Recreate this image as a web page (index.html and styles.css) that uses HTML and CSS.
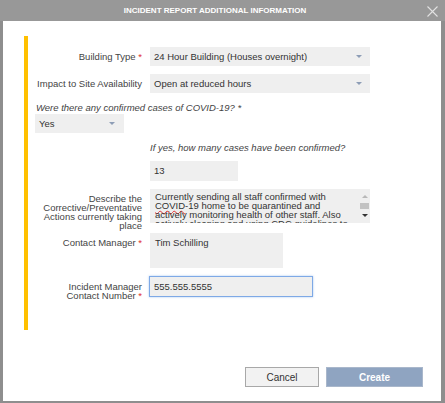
FILE: index.html
```html
<!DOCTYPE html>
<html>
<head>
<meta charset="utf-8">
<link rel="stylesheet" href="styles.css">
</head>
<body>
<div class="dialog">
  <div class="titlebar">
    <span class="title">INCIDENT REPORT ADDITIONAL INFORMATION</span>
    <svg class="close" width="11" height="11" viewBox="0 0 11 11"><path d="M0.5 0.5L10.5 10.5M10.5 0.5L0.5 10.5" stroke="#e2e2e2" stroke-width="1.1" fill="none"/></svg>
  </div>
  <div class="content">
    <div class="section">
      <div class="row row-select">
        <div class="label">Building Type <span class="req">*</span></div>
        <div class="select wide"><span>24 Hour Building (Houses overnight)</span><span class="caret"></span></div>
      </div>
      <div class="row row-select gap8">
        <div class="label">Impact to Site Availability</div>
        <div class="select wide"><span>Open at reduced hours</span><span class="caret"></span></div>
      </div>
      <div class="question">Were there any confirmed cases of COVID-19? *</div>
      <div class="select small"><span>Yes</span><span class="caret"></span></div>
      <div class="question sub">If yes, how many cases have been confirmed?</div>
      <div class="input count">13</div>
      <div class="row gap8">
        <div class="label multi">Describe the<br>Corrective/Preventative<br>Actions currently taking<br>place</div>
        <div class="textarea">
          <div class="ta-text">Currently sending all staff confirmed with<br><span class="spell">COVID</span>-19 home to be quarantined and<br>actively monitoring health of other staff. Also<br>actively cleaning and using CDC guidelines to</div>
          <div class="scrollbar">
            <span class="sb-up"></span>
            <span class="sb-thumb"></span>
            <span class="sb-down"></span>
          </div>
        </div>
      </div>
      <div class="row gap3">
        <div class="label single">Contact Manager <span class="req">*</span></div>
        <div class="input manager">Tim Schilling</div>
      </div>
      <div class="row gap8">
        <div class="label multi phone-label">Incident Manager<br>Contact Number <span class="req">*</span></div>
        <div class="input phone">555.555.5555</div>
      </div>
    </div>
    <div class="actions">
      <button class="btn cancel">Cancel</button>
      <button class="btn create">Create</button>
    </div>
  </div>
</div>
</body>
</html>
```
FILE: styles.css
```css
html, body {
  margin: 0;
  padding: 0;
}
body {
  background: #8e8e8e;
  font-family: "Liberation Sans", Arial, sans-serif;
  font-size: 9.5px;
  color: #444;
}
.dialog {
  width: 445px;
  height: 403px;
  display: flex;
  flex-direction: column;
}
.titlebar {
  height: 21px;
  flex-shrink: 0;
  background: #989898;
  display: flex;
  align-items: center;
}
.title {
  flex: 1;
  text-align: center;
  color: #fff;
  font-weight: bold;
  font-size: 8px;
  padding-left: 3px;
}
.close {
  display: block;
  margin-right: 7px;
  margin-top: 1px;
}
.content {
  flex: 1;
  background: #fff;
  margin: 0 4px 2px 3px;
  display: flex;
  flex-direction: column;
}
.section {
  margin: 15px 0 0 21px;
  height: 294px;
  box-sizing: border-box;
  border-left: 4px solid #ffc000;
  padding: 11px 0 0 7px;
}
.row {
  display: flex;
  align-items: flex-start;
}
.row-select {
  align-items: center;
}
.gap8 { margin-top: 8px; }
.gap3 { margin-top: 3px; }
.label {
  width: 107px;
  flex-shrink: 0;
  margin-right: 8px;
  text-align: right;
  color: #444;
  line-height: 11px;
}
.label.multi {
  line-height: 9px;
  padding-top: 5px;
}
.label.single {
  padding-top: 4px;
}
.label.phone-label {
  padding-top: 6px;
}
.req {
  color: #e03030;
}
.select {
  height: 19px;
  background: #efefef;
  color: #333;
  display: flex;
  align-items: center;
  justify-content: space-between;
  padding: 0 8px 0 4px;
  box-sizing: border-box;
}
.select.wide { width: 220px; }
.select.small { width: 89px; padding-right: 9px; }
.caret {
  width: 0;
  height: 0;
  border-left: 3px solid transparent;
  border-right: 3px solid transparent;
  border-top: 3px solid #8d9db6;
}
.question {
  font-style: italic;
  line-height: 12px;
  margin-top: 9px;
  padding-left: 1px;
  color: #444;
}
.question.sub {
  margin-left: 114px;
}
.input {
  background: #efefef;
  color: #333;
  box-sizing: border-box;
}
.count {
  width: 88px;
  height: 20px;
  margin: 7px 0 0 115px;
  padding-left: 4px;
  line-height: 20px;
}
.textarea {
  width: 220px;
  height: 34px;
  background: #efefef;
  display: flex;
  overflow: hidden;
}
.ta-text {
  flex: 1;
  padding: 3px 0 0 5px;
  line-height: 9px;
  color: #333;
  white-space: nowrap;
  overflow: hidden;
}
.spell {
  text-decoration: underline wavy #e03030;
  text-decoration-thickness: 1px;
  text-underline-offset: 1px;
}
.scrollbar {
  width: 9px;
  margin-right: 1px;
  display: flex;
  flex-direction: column;
  align-items: center;
  padding-top: 6px;
}
.sb-up {
  width: 0;
  height: 0;
  border-left: 3px solid transparent;
  border-right: 3px solid transparent;
  border-bottom: 3px solid #b8b8b8;
}
.sb-thumb {
  width: 9px;
  height: 6px;
  background: #c2c2c2;
  margin-top: 5px;
}
.sb-down {
  width: 0;
  height: 0;
  border-left: 3px solid transparent;
  border-right: 3px solid transparent;
  border-top: 3px solid #333;
  margin-top: 5px;
}
.manager {
  width: 133px;
  height: 35px;
  padding: 4px 5px 0 5px;
  line-height: 11px;
}
.phone {
  width: 164px;
  height: 21px;
  margin-left: -1px;
  border: 1px solid #7ea9e6;
  box-shadow: 0 0 2px rgba(110, 160, 230, 0.6);
  padding-left: 4px;
  line-height: 19px;
}
.actions {
  display: flex;
  justify-content: flex-end;
  gap: 7px;
  margin-top: 37px;
  padding-right: 18px;
}
.btn {
  height: 20px;
  font-family: "Liberation Sans", Arial, sans-serif;
  font-size: 10px;
  padding: 0;
  margin: 0;
  box-sizing: border-box;
}
.cancel {
  width: 74px;
  background: #f2f2f2;
  border: 1px solid #a8a8a8;
  color: #333;
}
.create {
  width: 97px;
  background: #8fa4c1;
  border: 1px solid #a9b7cb;
  color: #fff;
  font-weight: bold;
}
```
